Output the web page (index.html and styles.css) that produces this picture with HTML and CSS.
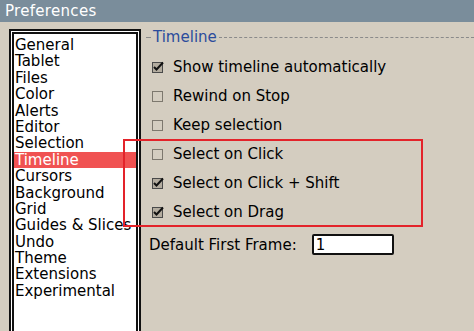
FILE: index.html
```html
<!DOCTYPE html>
<html lang="en">

<head>
    <meta charset="UTF-8">
    <meta name="viewport" content="width=device-width, initial-scale=1.0">
    <title>Preferences</title>
    <link rel="stylesheet" href="styles.css">
</head>

<body>
    <div class="titlebar">Preferences</div>
    <div class="window">
        <div class="list">
            <ul class="list-inner">
                <li>General</li>
                <li>Tablet</li>
                <li>Files</li>
                <li>Color</li>
                <li>Alerts</li>
                <li>Editor</li>
                <li>Selection</li>
                <li class="selected">Timeline</li>
                <li>Cursors</li>
                <li>Background</li>
                <li>Grid</li>
                <li>Guides &amp; Slices</li>
                <li>Undo</li>
                <li>Theme</li>
                <li>Extensions</li>
                <li>Experimental</li>
            </ul>
        </div>

        <div class="panel">
            <div class="group-title"><span class="dash-lead"></span><span class="group-name">Timeline</span><span class="dash-fill"></span></div>

            <div class="options">
                <div class="row">
                    <svg class="check" viewBox="0 0 12 12"><rect x="0.5" y="1.5" width="10" height="10" fill="#b3ac9f" stroke="#4a4a4a" /><path d="M2 6 L4.5 8.5 L11 1.5" fill="none" stroke="#111" stroke-width="2" /></svg>
                    <span>Show timeline automatically</span>
                </div>
                <div class="row">
                    <svg class="check" viewBox="0 0 12 12"><rect x="0.5" y="1.5" width="10" height="10" fill="none" stroke="#7d786e" /></svg>
                    <span>Rewind on Stop</span>
                </div>
                <div class="row">
                    <svg class="check" viewBox="0 0 12 12"><rect x="0.5" y="1.5" width="10" height="10" fill="none" stroke="#7d786e" /></svg>
                    <span>Keep selection</span>
                </div>
                <div class="row">
                    <svg class="check" viewBox="0 0 12 12"><rect x="0.5" y="1.5" width="10" height="10" fill="none" stroke="#7d786e" /></svg>
                    <span>Select on Click</span>
                </div>
                <div class="row">
                    <svg class="check" viewBox="0 0 12 12"><rect x="0.5" y="1.5" width="10" height="10" fill="#b3ac9f" stroke="#4a4a4a" /><path d="M2 6 L4.5 8.5 L11 1.5" fill="none" stroke="#111" stroke-width="2" /></svg>
                    <span>Select on Click + Shift</span>
                </div>
                <div class="row">
                    <svg class="check" viewBox="0 0 12 12"><rect x="0.5" y="1.5" width="10" height="10" fill="#b3ac9f" stroke="#4a4a4a" /><path d="M2 6 L4.5 8.5 L11 1.5" fill="none" stroke="#111" stroke-width="2" /></svg>
                    <span>Select on Drag</span>
                </div>
            </div>

            <div class="frame-row">
                <label for="first-frame">Default First Frame:</label>
                <input type="text" id="first-frame" value="1">
            </div>

            <div class="highlight"></div>
        </div>
    </div>
</body>

</html>
```

FILE: styles.css
```css
body {
    font-family: "DejaVu Sans", Verdana, sans-serif;
    font-size: 15px;
    background-color: #d4cdc0;
    color: #000;
    margin: 0;
    padding: 0;
    height: 331px;
    overflow: hidden;
}

.titlebar {
    height: 22px;
    line-height: 22px;
    background-color: #7a8d9b;
    color: #fff;
    padding-left: 5px;
    font-size: 15px;
    letter-spacing: 0.3px;
}

.window {
    display: flex;
    position: relative;
    height: 309px;
}

.list {
    margin: 7px 0 0 9px;
    width: 132px;
    height: 302px;
    border: 2px solid #111;
    border-bottom: none;
    background-color: #fff;
    padding: 1px 1px 0 1px;
    box-sizing: border-box;
    flex-shrink: 0;
}

.list-inner {
    list-style: none;
    margin: 0;
    padding: 3px 0 0 0;
    height: 100%;
    border: 2px solid #111;
    border-bottom: none;
    box-sizing: border-box;
}

.list-inner li {
    line-height: 16.4px;
    height: 16.4px;
    padding-left: 1px;
    white-space: nowrap;
    overflow: hidden;
}

.list-inner li.selected {
    background-color: #f05252;
    color: #fff;
}

.panel {
    flex: 1;
    position: relative;
    padding: 8px 0 0 5px;
}

.group-title {
    display: flex;
    align-items: center;
    height: 14px;
}

.dash-lead {
    width: 5px;
    border-top: 1px dashed #8a8a8a;
    margin-right: 2px;
}

.group-name {
    color: #2b4c9c;
}

.dash-fill {
    flex: 1;
    border-top: 1px dashed #8a8a8a;
    margin-left: 2px;
}

.options {
    margin-top: 8px;
}

.row {
    display: flex;
    align-items: center;
    height: 29px;
    padding-left: 6px;
}

.check {
    width: 12px;
    height: 12px;
    margin-right: 9px;
}

.frame-row {
    display: flex;
    align-items: center;
    gap: 15px;
    margin-top: 8px;
    padding-left: 3px;
}

.frame-row input {
    width: 82px;
    height: 21px;
    border: 2px solid #111;
    border-radius: 2px;
    background-color: #fff;
    font-family: "DejaVu Sans", Verdana, sans-serif;
    font-size: 15px;
    padding: 0 2px;
    box-sizing: border-box;
}

.highlight {
    position: absolute;
    left: -18px;
    top: 117px;
    width: 300px;
    height: 88px;
    border: 2px solid #e3232a;
    box-sizing: border-box;
}
```
